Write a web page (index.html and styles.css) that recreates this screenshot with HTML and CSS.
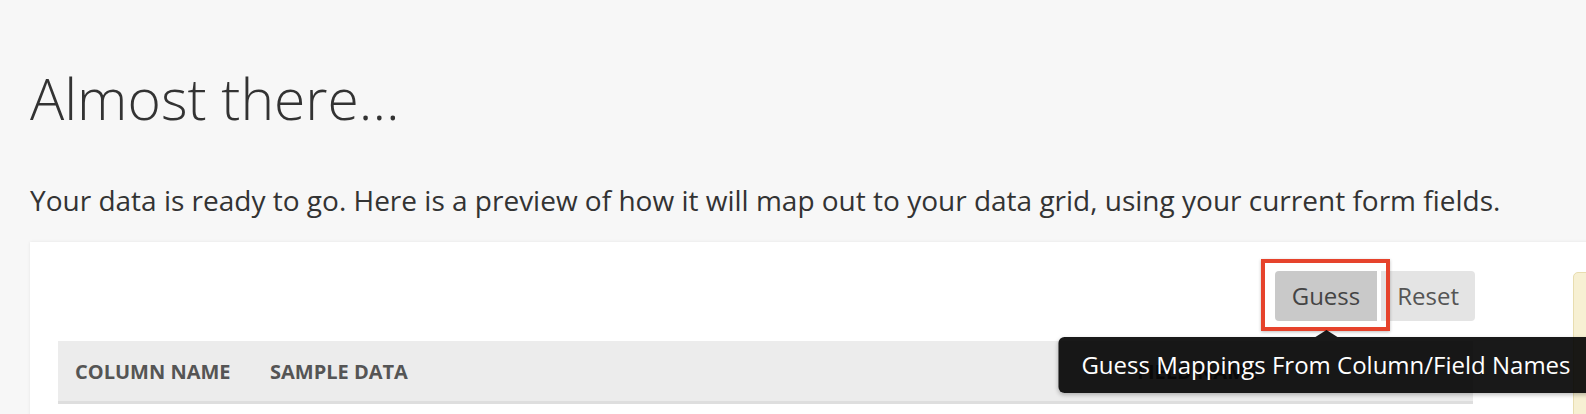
FILE: index.html
```html
<!DOCTYPE html>
<html lang="en">
<head>
<meta charset="utf-8">
<title>Almost there</title>
<link rel="stylesheet" href="styles.css">
</head>
<body>
<div class="page">
  <h1 class="title">Almost there...</h1>
  <p class="lead">Your data is ready to go. Here is a preview of how it will map out to your data grid, using your current form fields.</p>
  <div class="card">
    <div class="main">
      <div class="toolbar">
        <div class="btn-group">
          <button class="btn btn-guess">Guess
            <span class="highlight"></span>
            <span class="tooltip">Guess Mappings From Column/Field Names</span>
          </button>
          <button class="btn btn-reset">Reset</button>
        </div>
      </div>
      <table class="map-table">
        <colgroup>
          <col class="c-name">
          <col class="c-sample">
          <col class="c-field">
        </colgroup>
        <thead>
          <tr>
            <th>COLUMN NAME</th>
            <th>SAMPLE DATA</th>
            <th>FIELD NAME</th>
          </tr>
        </thead>
      </table>
    </div>
    <div class="side-panel"></div>
  </div>
</div>
</body>
</html>
```
FILE: styles.css
```css
html {
  overflow: hidden;
}
body {
  margin: 0;
  background: #f7f7f7;
  font-family: "Open Sans", "DejaVu Sans", sans-serif;
  color: #333;
}
.page {
  padding-left: 30px;
}
.title {
  margin: 63px 0 0;
  font-size: 57px;
  line-height: 70px;
  font-weight: 300;
  color: #333;
}
.lead {
  margin: 48px 0 0;
  font-size: 28px;
  line-height: 38px;
  color: #333;
  white-space: nowrap;
}
.card {
  margin-top: 23px;
  width: 1640px;
  min-height: 200px;
  background: #fff;
  box-shadow: 0 0 3px rgba(0, 0, 0, 0.08);
  padding: 29px 0 0 28px;
  display: flex;
  box-sizing: border-box;
}
.main {
  flex: 0 0 1417px;
}
.toolbar {
  display: flex;
  justify-content: flex-end;
}
.btn-group {
  display: flex;
  gap: 4px;
}
.btn {
  position: relative;
  border: 0;
  height: 50px;
  line-height: 50px;
  padding: 0 16px;
  font-family: "Open Sans", "DejaVu Sans", sans-serif;
  font-size: 24px;
  cursor: pointer;
}
.btn-guess {
  background: #c9c9c9;
  color: #444;
  border-radius: 4px 0 0 4px;
  padding: 0 17px;
}
.btn-reset {
  background: #e4e4e4;
  color: #555;
  border-radius: 0 4px 4px 0;
}
.highlight {
  position: absolute;
  left: -14px;
  top: -12px;
  width: 129px;
  height: 72px;
  box-sizing: border-box;
  border: 4px solid #e6432c;
  box-shadow: 0 1px 3px rgba(0, 0, 0, 0.25);
  z-index: 2;
  pointer-events: none;
}
.tooltip {
  position: absolute;
  top: 66px;
  left: 50%;
  transform: translateX(-50%);
  background: rgba(0, 0, 0, 0.9);
  color: #fff;
  font-size: 24px;
  line-height: 56px;
  height: 56px;
  padding: 0 23px;
  border-radius: 6px;
  white-space: nowrap;
  box-shadow: 0 2px 4px rgba(0, 0, 0, 0.25);
  z-index: 3;
  text-align: left;
}
.tooltip::before {
  content: "";
  position: absolute;
  top: -7px;
  left: 50%;
  margin-left: -11px;
  border-left: 11px solid transparent;
  border-right: 11px solid transparent;
  border-bottom: 7px solid rgba(0, 0, 0, 0.9);
}
.map-table {
  margin-top: 20px;
  width: 1415px;
  border-collapse: collapse;
  table-layout: fixed;
}
.c-name {
  width: 195px;
}
.c-sample {
  width: 867px;
}
.map-table th {
  background: #ececec;
  border-bottom: 3px solid #dedede;
  height: 60px;
  padding: 0 0 0 17px;
  text-align: left;
  font-size: 20px;
  font-weight: 700;
  color: #555;
  white-space: nowrap;
  overflow: hidden;
}
.side-panel {
  flex: 0 0 200px;
  margin-left: 98px;
  margin-top: 1px;
  height: 200px;
  background: #f7f0d3;
  border: 1px solid #e8ddb0;
  border-radius: 5px 0 0 0;
}
```
